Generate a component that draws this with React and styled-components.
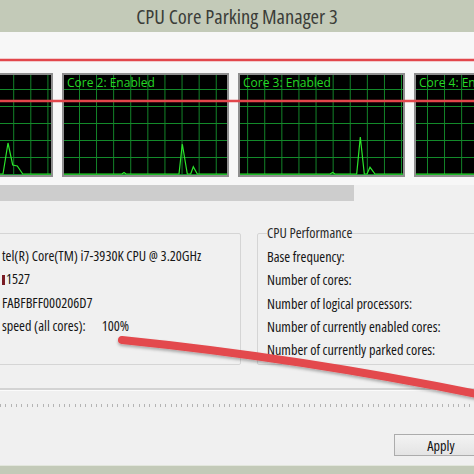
import React from "react";
import styled, { createGlobalStyle } from "styled-components";

const GlobalStyle = createGlobalStyle`
  html, body { margin: 0; padding: 0; background: #f0f0f0; }
  body { width: 474px; height: 474px; overflow: hidden; }
`;

const uiFont = `"Open Sans", "Noto Sans", sans-serif`;

const Window = styled.div`
  position: relative;
  width: 474px;
  height: 474px;
  overflow: hidden;
  display: flex;
  flex-direction: column;
  background: #f0f0f0;
`;

const TitleBar = styled.header`
  flex: none;
  height: 32px;
  display: flex;
  align-items: center;
  justify-content: center;
  background: #c3cab8;
  color: #3b3d38;
  font-family: ${uiFont};
  font-size: 20.5px;
  font-stretch: 75%;
`;

const GraphStrip = styled.section`
  flex: none;
  height: 153px;
  box-sizing: border-box;
  padding-top: 41px;
  background: #f7f7f7;
  overflow: hidden;
`;

const CoreRow = styled.div`
  display: flex;
  gap: 9px;
  margin-left: -114px;
`;

const CorePanel = styled.div`
  position: relative;
  flex: none;
  width: 167px;
  height: 104px;
  box-sizing: border-box;
  border: 2px solid #8f8f8f;
  background-color: #000;
  background-image:
    linear-gradient(to right, #138a2a 1px, transparent 1px),
    linear-gradient(to bottom, #138a2a 1px, transparent 1px);
  background-size: 17.1px 17px;
  background-position: ${(p) => p.$gx}px 14px;
`;

const CoreLabel = styled.div`
  position: relative;
  padding-left: 3px;
  line-height: 16px;
  color: #25d925;
  font-family: ${uiFont};
  font-size: 12px;
`;

const Graph = styled.svg`
  position: absolute;
  left: 0;
  top: 0;
`;

const ScrollBar = styled.div`
  flex: none;
  height: 16px;
  background: #f0f0f0;
`;

const Thumb = styled.div`
  width: 354px;
  height: 100%;
  background: #cdcdcd;
`;

const Body = styled.main`
  flex: 1;
  display: flex;
  flex-direction: column;
  padding-top: 24px;
  font-family: ${uiFont};
  font-size: 14.2px;
  font-stretch: 75%;
  color: #161616;
`;

const Groups = styled.div`
  display: flex;
  gap: 16px;
  height: 140px;
`;

const GroupBox = styled.fieldset`
  flex: none;
  box-sizing: border-box;
  min-width: 0;
  margin: ${(p) => (p.$offset ? "8px 0 0 -20px" : "0")};
  width: ${(p) => p.$width}px;
  padding: ${(p) => (p.$offset ? "10px 0 0 21px" : "4px 0 0 9px")};
  border: 1px solid #d5d5d5;
  border-radius: 2px;
`;

const Legend = styled.legend`
  padding: 0;
  line-height: 16px;
  color: #2a2a2a;
`;

const Row = styled.div`
  line-height: 23.3px;
  white-space: nowrap;
`;

const Value = styled.span`
  margin-left: 16px;
`;

const Clip = styled.span`
  display: inline-block;
  width: 3px;
  height: 10px;
  margin-right: 1px;
  background: #7a1c24;
  vertical-align: -1px;
`;

const Separator = styled.div`
  margin-top: 23px;
  height: 2px;
  background: #d3d3d3;
  border-bottom: 1px solid #fbfbfb;
`;

const Ticks = styled.div`
  margin-top: 13px;
  height: 3px;
  background: repeating-linear-gradient(
    to right,
    #b4b4b4 0 1px,
    transparent 1px 5.33px
  );
`;

const ButtonRow = styled.div`
  display: flex;
  justify-content: flex-end;
  margin: 27px -14px 0 0;
`;

const ApplyButton = styled.button`
  width: 94px;
  height: 22px;
  border: 1px solid #acacac;
  border-radius: 0;
  background: linear-gradient(#f3f3f3, #e4e4e4);
  font-family: ${uiFont};
  font-size: 14.2px;
  font-stretch: 75%;
  color: #111;
  padding: 0;
`;

const BottomFrame = styled.footer`
  flex: none;
  height: 8px;
  background: #c3cab8;
  border-top: 1px solid #e2e6dc;
`;

const Annotation = styled.svg`
  position: absolute;
  left: 0;
  top: 0;
  pointer-events: none;
`;

const cores = [
  {
    id: 1,
    gx: 5.6,
    points: "0,99 115,99 120,68 124.7,90 129.3,91 134.7,99 163,99",
  },
  {
    id: 2,
    gx: 15,
    points:
      "0,99 58,99 60,97.5 62,99 115,99 118.3,69 123.3,99 126.7,99 129.3,91.7 133.3,99 163,99",
  },
  {
    id: 3,
    gx: 7.2,
    points:
      "0,99 90,99 92.7,97.5 95,99 116.7,99 120.3,62 124.3,99 127,99 130,92.3 135,99 163,99",
  },
  { id: 4, gx: 11, points: "0,99 163,99" },
];

export default function App() {
  return (
    <Window>
      <GlobalStyle />
      <TitleBar>CPU Core Parking Manager 3</TitleBar>

      <GraphStrip>
        <CoreRow>
          {cores.map((c) => (
            <CorePanel key={c.id} $gx={c.gx}>
              <Graph width="163" height="100" viewBox="0 0 163 100">
                <polyline
                  points={c.points}
                  fill="none"
                  stroke="#2be52b"
                  strokeWidth="1.2"
                />
              </Graph>
              {c.id > 1 && <CoreLabel>Core {c.id}: Enabled</CoreLabel>}
            </CorePanel>
          ))}
        </CoreRow>
      </GraphStrip>

      <ScrollBar>
        <Thumb />
      </ScrollBar>

      <Body>
        <Groups>
          <GroupBox $offset $width={261}>
            <Row>tel(R) Core(TM) i7-3930K CPU @ 3.20GHz</Row>
            <Row>
              <Clip />
              1527
            </Row>
            <Row>FABFBFF000206D7</Row>
            <Row>
              speed (all cores):<Value>100%</Value>
            </Row>
          </GroupBox>
          <GroupBox $width={240}>
            <Legend>CPU Performance</Legend>
            <Row>Base frequency:</Row>
            <Row>Number of cores:</Row>
            <Row>Number of logical processors:</Row>
            <Row>Number of currently enabled cores:</Row>
            <Row>Number of currently parked cores:</Row>
          </GroupBox>
        </Groups>
        <Separator />
        <Ticks />
        <ButtonRow>
          <ApplyButton>Apply</ApplyButton>
        </ButtonRow>
      </Body>

      <BottomFrame />

      <Annotation width="474" height="474" viewBox="0 0 474 474">
        <defs>
          <filter id="shade" x="-10%" y="-50%" width="120%" height="200%">
            <feDropShadow dx="0" dy="2" stdDeviation="1.5" floodColor="#000" floodOpacity="0.3" />
          </filter>
        </defs>
        <line x1="0" y1="60" x2="474" y2="60" stroke="#e2464b" strokeWidth="2.5" />
        <line x1="0" y1="101" x2="474" y2="101" stroke="#e2464b" strokeWidth="2.5" />
        <path
          d="M122 340 Q300 358 482 395"
          fill="none"
          stroke="#e3494d"
          strokeWidth="8"
          strokeLinecap="round"
          filter="url(#shade)"
        />
      </Annotation>
    </Window>
  );
}
